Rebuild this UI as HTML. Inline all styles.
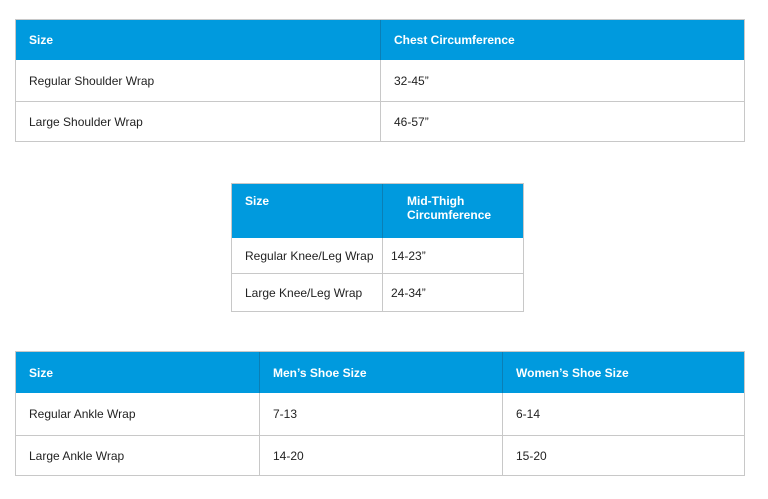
<!DOCTYPE html>
<html><head><style>
body{margin:0;width:768px;height:499px;background:#fff;font-family:"Liberation Sans",sans-serif;font-size:12px;color:#222;position:relative;overflow:hidden}
.t{position:absolute;border:1px solid #c8c8c8;box-sizing:border-box}
.c{position:absolute;box-sizing:border-box;padding-left:13px;display:flex;align-items:center;line-height:14px}
.h{background:#009ade;color:#fff;font-weight:bold}
.bl{border-left:1px solid #c8c8c8}
.bt{border-top:1px solid #c8c8c8}
</style></head><body>
<div class="t" style="left:15px;top:19px;width:730px;height:123px">
 <div class="c h" style="left:0;top:0;width:365px;height:40px">Size</div>
 <div class="c h bl" style="left:364px;top:0;width:364px;height:40px;border-color:#0a7fb5">Chest Circumference</div>
 <div class="c" style="left:0;top:40px;width:365px;height:41px">Regular Shoulder Wrap</div>
 <div class="c bl" style="left:364px;top:40px;width:364px;height:41px">32-45”</div>
 <div class="c bt" style="left:0;top:81px;width:365px;height:40px">Large Shoulder Wrap</div>
 <div class="c bt bl" style="left:364px;top:81px;width:364px;height:40px">46-57”</div>
</div>
<div class="t" style="left:231px;top:183px;width:293px;height:129px">
 <div class="c h" style="left:0;top:0;width:151px;height:54px;align-items:flex-start;padding-top:10px">Size</div>
 <div class="c h bl" style="left:150px;top:0;width:141px;height:54px;align-items:flex-start;padding-top:10px;padding-left:24px;border-color:#0a7fb5">Mid-Thigh<br>Circumference</div>
 <div class="c" style="left:0;top:54px;width:151px;height:35px">Regular Knee/Leg Wrap</div>
 <div class="c bl" style="left:150px;top:54px;width:141px;height:35px;padding-left:8px">14-23”</div>
 <div class="c bt" style="left:0;top:89px;width:151px;height:38px">Large Knee/Leg Wrap</div>
 <div class="c bt bl" style="left:150px;top:89px;width:141px;height:38px;padding-left:8px">24-34”</div>
</div>
<div class="t" style="left:15px;top:351px;width:730px;height:125px">
 <div class="c h" style="left:0;top:0;width:244px;height:41px">Size</div>
 <div class="c h bl" style="left:243px;top:0;width:244px;height:41px;border-color:#0a7fb5">Men’s Shoe Size</div>
 <div class="c h bl" style="left:486px;top:0;width:242px;height:41px;border-color:#0a7fb5">Women’s Shoe Size</div>
 <div class="c" style="left:0;top:41px;width:244px;height:42px">Regular Ankle Wrap</div>
 <div class="c bl" style="left:243px;top:41px;width:244px;height:42px">7-13</div>
 <div class="c bl" style="left:486px;top:41px;width:242px;height:42px">6-14</div>
 <div class="c bt" style="left:0;top:83px;width:244px;height:40px">Large Ankle Wrap</div>
 <div class="c bt bl" style="left:243px;top:83px;width:244px;height:40px">14-20</div>
 <div class="c bt bl" style="left:486px;top:83px;width:242px;height:40px">15-20</div>
</div>
</body></html>
